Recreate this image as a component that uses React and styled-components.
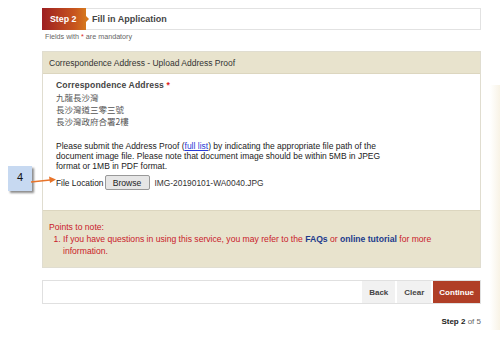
import React from "react";
import styled, { createGlobalStyle } from "styled-components";

const GlobalStyle = createGlobalStyle`
    * {
        box-sizing: border-box;
    }
    body {
        margin: 0;
        background: #fff;
        font-family: "Liberation Sans", Arial, sans-serif;
        color: #333;
    }
`;

function App() {
    return (
        <>
            <GlobalStyle />
            <Page>
                <Callout>
                    <CalloutBox>4</CalloutBox>
                    <Arrow width="26" height="10" viewBox="0 0 26 10">
                        <line x1="0" y1="6" x2="19" y2="4" stroke="#e8742a" strokeWidth="1.6" />
                        <polygon points="25,3.4 18,0.6 19,7" fill="#e8742a" />
                    </Arrow>
                </Callout>
                <SideGlow />
                <StepBar>
                    <StepBadge>Step 2</StepBadge>
                    <StepTitle>Fill in Application</StepTitle>
                </StepBar>
                <Mandatory>
                    Fields with <Star>*</Star> are mandatory
                </Mandatory>
                <Panel>
                    <PanelHeader>Correspondence Address - Upload Address Proof</PanelHeader>
                    <PanelBody>
                        <FieldLabel>
                            Correspondence Address <Star>*</Star>
                        </FieldLabel>
                        <AddressLine>九龍長沙灣</AddressLine>
                        <AddressLine>長沙灣道三零三號</AddressLine>
                        <AddressLine>長沙灣政府合署2樓</AddressLine>
                        <Instructions>
                            Please submit the Address Proof (<Link>full list</Link>) by indicating the appropriate file path of the
                            <br />
                            document image file. Please note that document image should be within 5MB in JPEG
                            <br />
                            format or 1MB in PDF format.
                        </Instructions>
                        <FileRow>
                            File Location
                            <BrowseButton>Browse</BrowseButton>
                            <FileName>IMG-20190101-WA0040.JPG</FileName>
                        </FileRow>
                    </PanelBody>
                    <Notes>
                        <NotesTitle>Points to note:</NotesTitle>
                        <NotesList>
                            <li>
                                If you have questions in using this service, you may refer to the <NoteLink>FAQs</NoteLink> or{" "}
                                <NoteLink>online tutorial</NoteLink> for more
                                <br />
                                information.
                            </li>
                        </NotesList>
                    </Notes>
                </Panel>
                <ActionBar>
                    <ActionButton>Back</ActionButton>
                    <ActionButton>Clear</ActionButton>
                    <ActionButton primary>Continue</ActionButton>
                </ActionBar>
                <StepCount>
                    <b>Step 2</b> of 5
                </StepCount>
            </Page>
        </>
    );
}

const Page = styled.div`
    position: relative;
    width: 500px;
    height: 338px;
    padding: 8px 19px 0 42px;
    overflow: hidden;
`;
const SideGlow = styled.div`
    position: absolute;
    right: 0;
    top: 85px;
    width: 10px;
    height: 245px;
    background: linear-gradient(to right, #fff, #f8f3e6);
`;
const Callout = styled.div`
    position: absolute;
    left: 8px;
    top: 166px;
    display: flex;
    align-items: center;
`;
const CalloutBox = styled.div`
    width: 24px;
    height: 25px;
    background: #c7d9f1;
    box-shadow: 2px 2px 2px rgba(0, 0, 0, 0.45);
    font-size: 11px;
    color: #111;
    display: flex;
    align-items: center;
    justify-content: center;
    padding-bottom: 4px;
`;
const Arrow = styled.svg`
    display: block;
    margin-left: -1px;
    margin-top: 4px;
`;
const StepBar = styled.div`
    display: flex;
    align-items: center;
    height: 22px;
    border: 1px solid #e2e2e2;
    border-left: none;
`;
const StepBadge = styled.div`
    position: relative;
    height: 22px;
    margin-top: -1px;
    margin-bottom: -1px;
    width: 44px;
    padding-left: 8px;
    display: flex;
    align-items: center;
    background: linear-gradient(to right, #9d1f22, #c8561e 75%, #d6781c);
    color: #fff;
    font-weight: bold;
    font-size: 8.8px;
    &::after {
        content: "";
        position: absolute;
        right: -3px;
        top: 8px;
        border-left: 3px solid #d6781c;
        border-top: 3px solid transparent;
        border-bottom: 3px solid transparent;
    }
`;
const StepTitle = styled.div`
    margin-left: 6px;
    font-size: 9px;
    font-weight: bold;
    color: #444;
`;
const Mandatory = styled.div`
    font-size: 7.2px;
    color: #666;
    margin: 2px 0 0 3px;
    height: 19px;
`;
const Star = styled.span`
    color: #d22;
`;
const Panel = styled.div`
    border: 1px solid #e0ddd0;
`;
const PanelHeader = styled.div`
    height: 22px;
    background: #e8e3cd;
    padding-left: 6px;
    display: flex;
    align-items: center;
    font-size: 8.5px;
    color: #333;
    border-bottom: 1px solid #dcd6bf;
`;
const PanelBody = styled.div`
    background: #fff;
    padding: 5px 0 20px 13px;
`;
const FieldLabel = styled.div`
    font-size: 8.6px;
    font-weight: bold;
    color: #444;
    line-height: 12px;
    letter-spacing: 0.15px;
`;
const AddressLine = styled.div`
    font-family: "Noto Sans CJK TC", "Noto Sans CJK SC", sans-serif;
    font-size: 8.5px;
    line-height: 12px;
    color: #555;
`;
const Instructions = styled.p`
    margin: 14px 0 0 0;
    font-size: 8.5px;
    line-height: 10px;
    color: #222;
    white-space: nowrap;
`;
const Link = styled.span`
    color: #2a3bd6;
    text-decoration: underline;
`;
const FileRow = styled.div`
    display: flex;
    align-items: center;
    margin-top: 4px;
    font-size: 8.4px;
    color: #222;
`;
const BrowseButton = styled.div`
    margin: 0 5px 0 1px;
    width: 45px;
    height: 15px;
    border: 1px solid #999;
    border-radius: 2px;
    background: #e6e6e6;
    display: flex;
    align-items: center;
    justify-content: center;
    font-size: 8.6px;
`;
const FileName = styled.span`
    color: #333;
`;
const Notes = styled.div`
    background: #e8e3cd;
    border-top: 1px solid #dcd6bf;
    padding: 10px 6px 13px;
    font-size: 8.6px;
    line-height: 12px;
    color: #c8202a;
    height: 57px;
`;
const NotesTitle = styled.div``;
const NotesList = styled.ol`
    margin: 0;
    padding-left: 14px;
    white-space: nowrap;
`;
const NoteLink = styled.b`
    color: #1c3a8c;
`;
const ActionBar = styled.div`
    margin-top: 12px;
    height: 24px;
    border: 1px solid #e0e0e0;
    display: flex;
    justify-content: flex-end;
    align-items: stretch;
    gap: 2px;
`;
const ActionButton = styled.div`
    display: flex;
    align-items: center;
    padding: 0 ${(p) => (p.primary ? "6px" : "7px")};
    background: ${(p) => (p.primary ? "#b03e26" : "#f1f1f1")};
    color: ${(p) => (p.primary ? "#fff" : "#444")};
    font-size: 8px;
    font-weight: bold;
`;
const StepCount = styled.div`
    margin-top: 13px;
    text-align: right;
    font-size: 8px;
    color: #666;
    b {
        color: #222;
    }
`;

export default App;
